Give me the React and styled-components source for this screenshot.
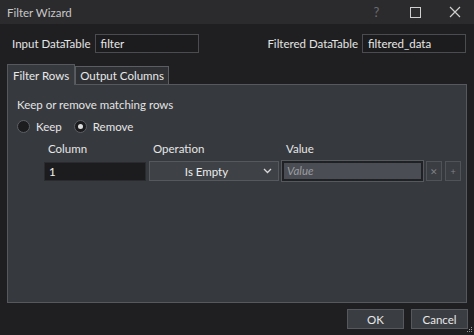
import React from "react";
import styled, { createGlobalStyle } from "styled-components";

const Global = createGlobalStyle`
  html, body { margin: 0; padding: 0; background: #1f1f21; }
  body { font-family: Lato, "Noto Sans", sans-serif; font-size: 11.5px; color: #e6e6e6; }
`;

const Window = styled.div`
  width: 474px;
  height: 335px;
  display: flex;
  flex-direction: column;
  background: #1f1f21;
  position: relative;
  overflow: hidden;
`;

const TitleBar = styled.div`
  height: 24px;
  display: flex;
  align-items: center;
  background: #2b2b2e;
  padding-left: 7px;
  color: #c8c8c8;
`;

const Title = styled.div`
  flex: 1;
`;

const TitleBtn = styled.div`
  width: 39px;
  height: 24px;
  display: flex;
  align-items: center;
  justify-content: center;
  color: ${p => (p.dim ? "#6b6b6e" : "#cfcfcf")};
  font-size: 13px;
`;

const TopRow = styled.div`
  display: flex;
  align-items: center;
  padding: 9px 8px 0 12px;
  height: 20px;
`;

const Label = styled.span`
  color: #e4e4e4;
  margin-right: 4px;
  white-space: nowrap;
`;

const TextBox = styled.div`
  width: ${p => p.w}px;
  height: 19px;
  box-sizing: border-box;
  border: 1px solid #4a4c50;
  background: #1c1c1e;
  color: #e8e8e8;
  padding: 0 5px;
  line-height: 17px;
`;

const Spacer = styled.div`
  flex: 1;
`;

const Tabs = styled.div`
  display: flex;
  align-items: flex-end;
  margin: 10px 0 0 7px;
  height: 21px;
`;

const Tab = styled.div`
  height: ${p => (p.active ? 21 : 18)}px;
  box-sizing: border-box;
  padding: 0 ${p => (p.active ? 5 : 4)}px;
  display: flex;
  align-items: center;
  border: 1px solid ${p => (p.active ? "#55585d" : "#5a5d62")};
  border-bottom: none;
  background: ${p => (p.active ? "#36393e" : "#2e3034")};
  color: #e8e8e8;
  margin-bottom: ${p => (p.active ? -1 : 0)}px;
  position: relative;
  z-index: ${p => (p.active ? 2 : 1)};
`;

const Panel = styled.div`
  margin: 0 7px 0 7px;
  height: 219px;
  box-sizing: border-box;
  border: 1px solid #55585d;
  background: #36393e;
  padding: 11px 9px 0 9px;
`;

const Caption = styled.div`
  color: #e4e4e4;
  height: 18px;
  line-height: 18px;
`;

const Radios = styled.div`
  display: flex;
  align-items: center;
  gap: 12px;
  margin-top: 2px;
  height: 20px;
`;

const RadioItem = styled.label`
  display: flex;
  align-items: center;
  gap: 6px;
  color: #e6e6e6;
`;

const RadioDot = styled.span`
  width: 13px;
  height: 13px;
  border-radius: 50%;
  box-sizing: border-box;
  border: 1px solid #5c5f64;
  background: #1c1c1e;
  display: flex;
  align-items: center;
  justify-content: center;
  &::after {
    content: "";
    width: 5px;
    height: 5px;
    border-radius: 50%;
    background: ${p => (p.on ? "#dcdcdc" : "transparent")};
  }
`;

const Grid = styled.div`
  display: grid;
  grid-template-columns: 102px 130px 141px 16px 16px;
  column-gap: 3px;
  row-gap: 2px;
  margin-left: 27px;
  margin-top: 3px;
  align-items: center;
`;

const Head = styled.div`
  height: 20px;
  line-height: 20px;
  padding-left: 4px;
  color: #e6e6e6;
`;

const ColInput = styled.div`
  height: 19px;
  box-sizing: border-box;
  background: #1c1c1e;
  border: 1px solid #2a2b2e;
  padding: 0 4px;
  line-height: 17px;
  color: #f0f0f0;
`;

const Select = styled.div`
  height: 20px;
  box-sizing: border-box;
  background: #3e4146;
  border: 1px solid #55585d;
  display: flex;
  align-items: center;
  padding: 0 6px 0 0;
  color: #ececec;
  span { flex: 1; text-align: center; }
`;

const ValueInput = styled.div`
  height: 20px;
  box-sizing: border-box;
  background: #4a4d53;
  border: 2px solid #202124;
  outline: 1px solid #55585d;
  padding: 0 3px;
  line-height: 16px;
  color: #9a9ca0;
  font-style: italic;
`;

const SmallBtn = styled.div`
  height: 20px;
  box-sizing: border-box;
  border: 1px solid #505358;
  background: #3a3d42;
  display: flex;
  align-items: center;
  justify-content: center;
  color: #7d8085;
  font-size: 9px;
`;

const Footer = styled.div`
  display: flex;
  justify-content: flex-end;
  gap: 7px;
  padding: 6px 6px 0 0;
`;

const Button = styled.div`
  width: 57px;
  height: 20px;
  box-sizing: border-box;
  border: 1px solid #55585d;
  background: #3a3d42;
  color: #e8e8e8;
  display: flex;
  align-items: center;
  justify-content: center;
`;

const Grip = styled.svg`
  position: absolute;
  right: 1px;
  bottom: 2px;
`;

export default function App() {
  return (
    <Window>
      <Global />
      <TitleBar>
        <Title>Filter Wizard</Title>
        <TitleBtn dim>?</TitleBtn>
        <TitleBtn>
          <svg width="11" height="11" viewBox="0 0 11 11">
            <rect x="0.5" y="0.5" width="10" height="10" fill="none" stroke="#cfcfcf" strokeWidth="1" />
          </svg>
        </TitleBtn>
        <TitleBtn>
          <svg width="12" height="12" viewBox="0 0 12 12">
            <path d="M1 1 L11 11 M11 1 L1 11" stroke="#cfcfcf" strokeWidth="1.2" />
          </svg>
        </TitleBtn>
      </TitleBar>

      <TopRow>
        <Label>Input DataTable</Label>
        <TextBox w={104}>filter</TextBox>
        <Spacer />
        <Label>Filtered DataTable</Label>
        <TextBox w={104}>filtered_data</TextBox>
      </TopRow>

      <Tabs>
        <Tab active>Filter Rows</Tab>
        <Tab>Output Columns</Tab>
      </Tabs>

      <Panel>
        <Caption>Keep or remove matching rows</Caption>
        <Radios>
          <RadioItem>
            <RadioDot />
            Keep
          </RadioItem>
          <RadioItem>
            <RadioDot on />
            Remove
          </RadioItem>
        </Radios>
        <Grid>
          <Head>Column</Head>
          <Head>Operation</Head>
          <Head>Value</Head>
          <div />
          <div />
          <ColInput>1</ColInput>
          <Select>
            <span>Is Empty</span>
            <svg width="9" height="6" viewBox="0 0 9 6">
              <path d="M1 1 L4.5 4.5 L8 1" fill="none" stroke="#d8d8d8" strokeWidth="1.3" />
            </svg>
          </Select>
          <ValueInput>Value</ValueInput>
          <SmallBtn>✕</SmallBtn>
          <SmallBtn>+</SmallBtn>
        </Grid>
      </Panel>

      <Footer>
        <Button>OK</Button>
        <Button>Cancel</Button>
      </Footer>
      <Grip width="6" height="6" viewBox="0 0 6 6">
        <rect x="4" y="0" width="1" height="1" fill="#9a9a9a" />
        <rect x="2" y="2" width="1" height="1" fill="#9a9a9a" />
        <rect x="4" y="2" width="1" height="1" fill="#9a9a9a" />
        <rect x="0" y="4" width="1" height="1" fill="#9a9a9a" />
        <rect x="2" y="4" width="1" height="1" fill="#9a9a9a" />
        <rect x="4" y="4" width="1" height="1" fill="#9a9a9a" />
      </Grip>
    </Window>
  );
}
